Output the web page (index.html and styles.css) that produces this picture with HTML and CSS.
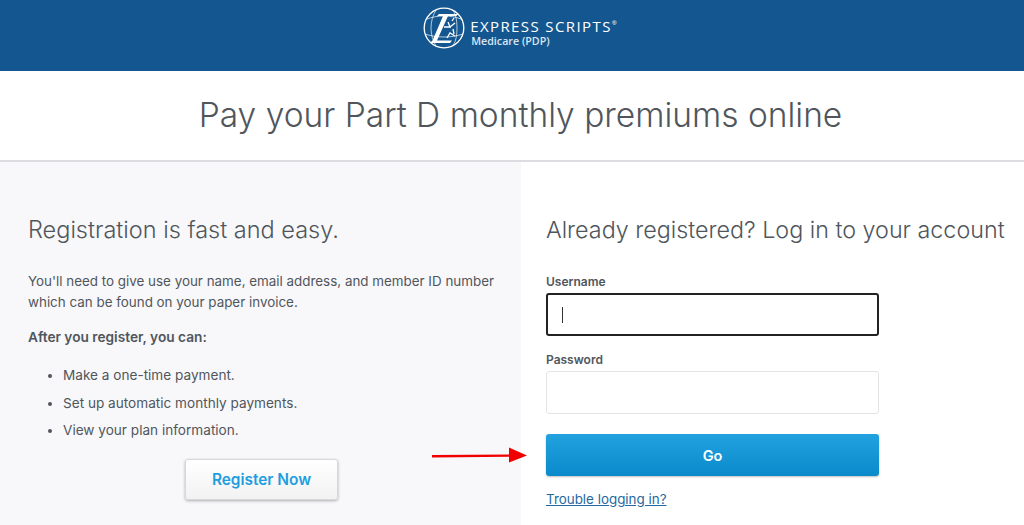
FILE: index.html
```html
<!DOCTYPE html>
<html lang="en">
<head>
<meta charset="utf-8">
<title>Pay your Part D monthly premiums online</title>
<link rel="stylesheet" href="styles.css">
</head>
<body>
<header class="topbar">
  <div class="brand">
    <svg class="globe" viewBox="0 0 42 42" width="42" height="42" fill="none" stroke="#fff">
      <circle cx="21" cy="21" r="19.800" stroke-width="1.300"/>
      <path d="M4 12c5-2 11-3 17-3s12 1 17 3M2 27c6 2 12 3 19 3s13-1 19-3M13 3c-3 5-5 11-5 18s2 13 5 18M30 3c3 5 4 11 4 18s-1 13-4 18" stroke-width=".8" opacity=".85"/>
      <path d="M16 7h19l-1.500 2H25L14 33.500h15l-2 2.500H7l2.500-2.500L20 9h-6z" fill="#fff" stroke="none"/>
      <path d="M21 20h7M25 15l2 5 5-4M31 11l-2 3M24 31l3-5 5 3M30 22l1 5" stroke-width="1.300"/>
    </svg>
    <div class="brand-text">
      <div class="brand-name">EXPRESS SCRIPTS<sup class="reg">®</sup></div>
      <div class="brand-sub">Medicare (PDP)</div>
    </div>
  </div>
</header>
<section class="title-band">
  <h1 class="title">Pay your Part D monthly premiums online</h1>
</section>
<main class="columns">
  <section class="col col-left">
    <h2 class="heading heading-left">Registration is fast and easy.</h2>
    <p class="para">You'll need to give use your name, email address, and member ID number which can be found on your paper invoice.</p>
    <p class="para strong">After you register, you can:</p>
    <ul class="list">
      <li>Make a one-time payment.</li>
      <li>Set up automatic monthly payments.</li>
      <li>View your plan information.</li>
    </ul>
    <div class="register-wrap"><a class="register" href="#">Register Now</a></div>
  </section>
  <section class="col col-right">
    <h2 class="heading heading-right">Already registered? Log in to your account</h2>
    <form class="form">
      <label class="label">Username</label>
      <div class="input focused"><span class="caret"></span></div>
      <label class="label label-pw">Password</label>
      <div class="input"></div>
      <button class="go" type="button">Go</button>
      <a class="trouble" href="#">Trouble logging in?</a>
    </form>
  </section>
</main>
<svg class="arrow" width="96" height="16" viewBox="0 0 96 16"><path d="M0 9.200 L 78 8.600" stroke="#f00000" stroke-width="2.400" fill="none"/><path d="M77 0.500 L95 8.500 L77 15.500z" fill="#f00000"/></svg>
</body>
</html>
```
FILE: styles.css
```css
* { box-sizing: border-box; }
html, body { margin: 0; padding: 0; height: 525px; overflow: hidden; }
body { font-family: Inter, Roboto, sans-serif; color: #50565c; background: #fff; position: relative; }
.topbar { height: 71px; background: #14568f; display: flex; justify-content: center; padding-top: 7px; }
.brand { display: flex; align-items: flex-start; gap: 5px; margin-left: 16px; }
.brand-text { padding-top: 12px; color: #fff; }
.brand-name { font-family: "Open Sans", sans-serif; font-size: 15px; line-height: 15px; letter-spacing: 1.400px; white-space: nowrap; }
.reg { font-size: 6px; vertical-align: top; line-height: 8px; letter-spacing: 0; }
.brand-sub { font-family: "Open Sans", sans-serif; font-size: 10.700px; font-weight: 600; line-height: 12px; margin-top: 1px; color: #dbe5ef; padding-left: 1px; }
.title-band { height: 91px; border-bottom: 2px solid #dcdde0; display: flex; justify-content: center; align-items: center; padding: 0 0 2px 17px; }
.title { margin: 0; font-size: 33.500px; font-weight: 300; color: #50565c; white-space: nowrap; }
.columns { display: flex; height: 363px; }
.col-left { width: 521px; background: #f8f8fa; padding: 55px 20px 0 28px; }
.col-right { width: 503px; padding: 55px 0 0 25px; }
.heading { margin: 0 0 28px; font-size: 23.300px; line-height: 26px; font-weight: 300; color: #50565c; white-space: nowrap; }
.heading-left { font-size: 23.500px; }
.heading-right { margin-bottom: 31px; }
.para { margin: 0 0 14px; font-size: 13.400px; line-height: 21px; }
.strong { font-weight: 600; font-size: 13.700px; }
.list { margin: 17px 0 0; padding: 0 0 0 35px; font-size: 13.600px; line-height: 21px; }
.list li { margin-bottom: 6.500px; }
.register-wrap { display: flex; justify-content: center; margin-top: 18px; padding-right: 6px; }
.register { width: 153px; height: 41px; display: flex; align-items: center; justify-content: center; border: 1px solid #d8d8d8; border-radius: 3px; background: linear-gradient(#fff, #f2f2f2); box-shadow: 0 1px 3px rgba(0,0,0,.3); color: #1e9ee0; font-size: 15.400px; font-weight: 600; text-decoration: none; }
.form { display: flex; flex-direction: column; width: 333px; }
.label { font-size: 12px; line-height: 16px; font-weight: 600; margin-bottom: 3px; }
.label-pw { margin-top: 16px; }
.input { height: 43px; border: 1px solid #e3e4e6; border-radius: 3px; background: #fff; display: flex; align-items: center; padding-left: 14px; }
.input.focused { border: 2px solid #222; }
.caret { width: 1px; height: 16px; background: #333; }
.go { margin-top: 20px; height: 42px; border: 0; border-radius: 3px; background: linear-gradient(#23a2e0, #0a8aca); box-shadow: 0 1px 2px rgba(0,0,0,.25); color: #fff; font: 600 14.500px Inter, sans-serif; }
.trouble { margin-top: 15px; font-size: 13.400px; color: #23689f; }
.arrow { position: absolute; left: 432px; top: 447px; }
```
